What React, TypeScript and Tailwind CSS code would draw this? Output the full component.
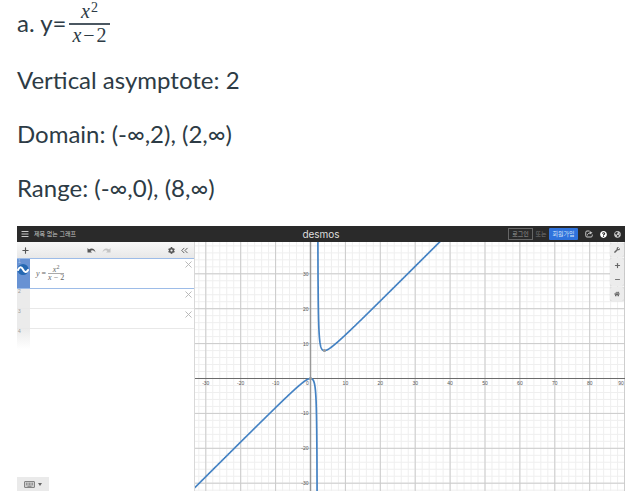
import type { ReactNode } from "react"
import { FaBars, FaCog, FaGlobeAmericas, FaHome, FaQuestionCircle, FaWrench } from "react-icons/fa"
import { ChevronsLeft, Minus, Plus, X } from "lucide-react"

const PLOT_WIDTH = 430
const PLOT_HEIGHT = 249
const ORIGIN_X = 115.5
const ORIGIN_Y = 136.5
const UNIT = 3.49

const toX = (x: number) => ORIGIN_X + x * UNIT
const toY = (y: number) => ORIGIN_Y - y * UNIT

const range = (from: number, to: number, step: number) => {
	const values: number[] = []
	for (let value = from; value <= to; value += step) values.push(value)
	return values
}

const curvePath = (from: number, to: number) => {
	const steps = 600
	const points: string[] = []
	for (let i = 0; i <= steps; i++) {
		const x = from + ((to - from) * i) / steps
		const y = (x * x) / (x - 2)
		points.push(`${toX(x).toFixed(2)} ${toY(y).toFixed(2)}`)
	}
	return `M${points.join("L")}`
}

function Fraction() {
	return (
		<span className="ml-[3px] inline-flex flex-col items-center font-['Liberation_Serif',serif] text-xl">
			<span className="flex leading-[23px]">
				<i>x</i>
				<sup className="top-0 pl-px text-sm leading-4">2</sup>
			</span>
			<span className="flex border-t-2 border-[#4b5761] px-[3px] leading-[21px]">
				<i>x</i>
				<span className="px-[2px]">−</span>
				<span>2</span>
			</span>
		</span>
	)
}

function Header() {
	return (
		<header className="flex h-4 items-center bg-[#2a2a2a] text-[6px] leading-none text-[#c8c8c8]">
			<div className="flex flex-1 items-center gap-[5px] pl-1">
				<button type="button" aria-label="Menu">
					<FaBars size={8} />
				</button>
				<h1>제목 없는 그래프</h1>
			</div>
			<div className="font-[Inter,sans-serif] text-[10px] leading-none text-[#dedede]">desmos</div>
			<div className="flex flex-1 items-center justify-end pr-1">
				<button type="button" className="h-3 w-[25px] border border-[#666] text-[#9a9a9a]">
					로그인
				</button>
				<span className="w-4 text-center text-[#777]">또는</span>
				<button type="button" className="h-3 w-[29px] rounded-[1px] bg-[#2f72dc] text-[#d5e3f8]">
					회원가입
				</button>
				<div className="flex items-center gap-[7px] pl-[7px]">
					<button type="button" aria-label="Share">
						<svg width="8" height="8" viewBox="0 0 16 16" fill="none" stroke="currentColor" strokeWidth="2">
							<path d="M9 2H4a2.500 2.500 0 0 0-2.500 2.500v7A2.500 2.500 0 0 0 4 14h8a2.500 2.500 0 0 0 2.500-2.500V9" />
							<path d="M4.500 11c.5-3.500 3-5 6-5" />
							<path d="M9.500 2v7L15 5.500z" fill="currentColor" stroke="none" />
						</svg>
					</button>
					<button type="button" aria-label="Help" className="text-white">
						<FaQuestionCircle size={7} />
					</button>
					<button type="button" aria-label="Language">
						<FaGlobeAmericas size={7} />
					</button>
				</div>
			</div>
		</header>
	)
}

function EmptyRow({ index }: { index: number }) {
	return (
		<div className="flex h-5 border-b border-[#e8e8e8]">
			<span className="w-[13px] bg-[#ebebeb] pl-px text-[5px] leading-none text-[#999]">{index}</span>
			<button type="button" aria-label={`Delete row ${index}`} className="ml-auto self-start text-[#b5b5b5]">
				<X size={11} />
			</button>
		</div>
	)
}

function ExpressionPanel() {
	return (
		<section className="flex w-[178px] shrink-0 flex-col border-r border-[#d8d8d8] bg-white">
			<div className="flex h-4 items-center bg-gradient-to-b from-[#f8f8f8] to-[#e8e8e8] px-1 text-[#555]">
				<button type="button" aria-label="Add item">
					<Plus size={9} strokeWidth={3} />
				</button>
				<div className="flex flex-1 justify-center gap-[6px]">
					<button type="button" aria-label="Undo">
						<svg width="9" height="7" viewBox="0 0 18 14" fill="currentColor">
							<path d="M1 2v9h9L7 8c3-2.500 7-2 10 3C16 3 9 1 4 5z" />
						</svg>
					</button>
					<button type="button" aria-label="Redo" className="text-[#c4c4c4]">
						<svg width="9" height="7" viewBox="0 0 18 14" fill="currentColor">
							<path d="M17 2v9H8l3-3C8 5.500 4 6 1 11 2 3 9 1 14 5z" />
						</svg>
					</button>
				</div>
				<button type="button" aria-label="Settings">
					<FaCog size={7} />
				</button>
				<button type="button" aria-label="Collapse" className="pl-1">
					<ChevronsLeft size={11} />
				</button>
			</div>

			<div className="flex h-[31px] border-y border-[#9dbce8]">
				<div className="w-[13px] bg-[#6892d3] text-[5px] leading-none text-[#a9c3ec]">
					<div className="pl-px">1</div>
					<svg width="12" height="12" viewBox="0 0 24 24" role="img" aria-label="Curve">
						<circle cx="12" cy="11" r="11" fill="#2568b2" />
						<path d="M2 12C5 5 9 5 12 11s7 7 10 1" fill="none" stroke="white" strokeWidth="4" strokeLinecap="round" />
					</svg>
				</div>
				<div className="flex flex-1 items-center gap-[2px] pl-[6px] font-['Liberation_Serif',serif] text-[8px] leading-none text-[#666]">
					<span>
						<i>y</i> =
					</span>
					<span className="flex flex-col items-center">
						<span className="leading-[7px]">
							<i>x</i>
							<sup className="text-[6px]">2</sup>
						</span>
						<span className="border-t border-[#aaa] leading-[7px]">
							<i>x</i> − 2
						</span>
					</span>
				</div>
				<button type="button" aria-label="Delete row 1" className="self-start text-[#b5b5b5]">
					<X size={11} />
				</button>
			</div>
			<EmptyRow index={2} />
			<EmptyRow index={3} />
			<div className="h-5 w-[13px] bg-gradient-to-b from-[#ebebeb] to-white pl-px text-[5px] leading-none text-[#999]">4</div>

			<button
				type="button"
				aria-label="Show keypad"
				className="mt-auto flex h-[14px] w-8 items-center justify-center gap-[3px] bg-[#eaeaea] text-[#666]"
			>
				<svg width="11" height="7" viewBox="0 0 22 14" fill="none" stroke="currentColor" strokeWidth="1.500">
					<rect x="1" y="1" width="20" height="12" rx="1" fill="#d0d0d0" />
					<path d="M4 4.500h14M4 7.500h14" strokeDasharray="2 1" />
					<path d="M7 10.500h8" />
				</svg>
				<svg width="4" height="3" viewBox="0 0 8 6" fill="currentColor">
					<path d="M0 0h8L4 6z" />
				</svg>
			</button>
		</section>
	)
}

function Plot() {
	return (
		<svg
			className="block h-[249px] w-full"
			viewBox={`0 0 ${PLOT_WIDTH} ${PLOT_HEIGHT}`}
			preserveAspectRatio="xMidYMid slice"
			role="img"
			aria-label="Graph of y = x²/(x − 2)"
		>
			<rect width={PLOT_WIDTH} height={PLOT_HEIGHT} fill="white" />
			<g stroke="#efefef">
				{range(-32, 90, 2).map((x) => (
					<path key={`x${x}`} d={`M${toX(x)} 0V${PLOT_HEIGHT}`} />
				))}
				{range(-32, 38, 2).map((y) => (
					<path key={`y${y}`} d={`M0 ${toY(y)}H${PLOT_WIDTH}`} />
				))}
			</g>
			<g stroke="#cbcbcb">
				{range(-30, 90, 10).map((x) => (
					<path key={`x${x}`} d={`M${toX(x)} 0V${PLOT_HEIGHT}`} />
				))}
				{range(-30, 30, 10).map((y) => (
					<path key={`y${y}`} d={`M0 ${toY(y)}H${PLOT_WIDTH}`} />
				))}
			</g>
			<path d={`M${ORIGIN_X} 0V${PLOT_HEIGHT}`} stroke="#999" strokeWidth="1.500" />
			<path d={`M0 ${ORIGIN_Y}H${PLOT_WIDTH}`} stroke="#6b6b6b" />

			<g className="font-['Liberation_Sans',sans-serif] text-[5px]" fill="#555">
				{range(-30, 90, 10).map((x) => (
					<text key={x} x={x === 0 ? toX(0) - 3 : Math.min(toX(x), PLOT_WIDTH - 4)} y={ORIGIN_Y + 6} textAnchor="middle">
						{x}
					</text>
				))}
				{range(-30, 30, 10)
					.filter((y) => y !== 0)
					.map((y) => (
						<text key={y} x={ORIGIN_X - 2} y={toY(y) + 2} textAnchor="end">
							{y}
						</text>
					))}
			</g>

			<g fill="none" stroke="#4482c3" strokeWidth="1.700">
				<path d={curvePath(-34, 1.9)} />
				<path d={curvePath(2.1, 40)} />
			</g>
			<circle cx={toX(0)} cy={toY(0)} r="1.500" fill="#999" />
			<circle cx={toX(4)} cy={toY(8)} r="1.500" fill="#999" />
		</svg>
	)
}

function ToolButton({ label, children }: { label: string; children: ReactNode }) {
	return (
		<button type="button" aria-label={label} className="flex h-[14px] w-[14px] items-center justify-center">
			{children}
		</button>
	)
}

function GraphTools() {
	return (
		<div className="absolute right-px top-px flex flex-col gap-px text-[#666] *:rounded-[2px] *:bg-[#ececec] *:shadow-[0_0_1px_#aaa]">
			<ToolButton label="Graph settings">
				<FaWrench size={6} />
			</ToolButton>
			<div>
				<ToolButton label="Zoom in">
					<Plus size={7} strokeWidth={4} />
				</ToolButton>
				<ToolButton label="Zoom out">
					<Minus size={7} strokeWidth={3} />
				</ToolButton>
			</div>
			<ToolButton label="Default view">
				<FaHome size={6} />
			</ToolButton>
		</div>
	)
}

export default function App() {
	return (
		<main className="bg-white pl-[17px] pr-3 font-[Lato,sans-serif] text-2xl leading-9 text-[#2d3b45]">
			<div className="flex h-[46px] items-center">
				<span>a. y=</span>
				<Fraction />
			</div>
			<p className="mt-4">Vertical asymptote: 2</p>
			<p className="mt-[18px]">Domain: (-∞,2), (2,∞)</p>
			<p className="mt-[18px]">Range: (-∞,0), (8,∞)</p>

			<div className="mt-5 font-['Liberation_Sans','Noto_Sans_CJK_KR',sans-serif]">
				<Header />
				<div className="flex">
					<ExpressionPanel />
					<div className="relative min-w-0 flex-1 overflow-hidden">
						<Plot />
						<GraphTools />
					</div>
				</div>
			</div>
		</main>
	)
}
